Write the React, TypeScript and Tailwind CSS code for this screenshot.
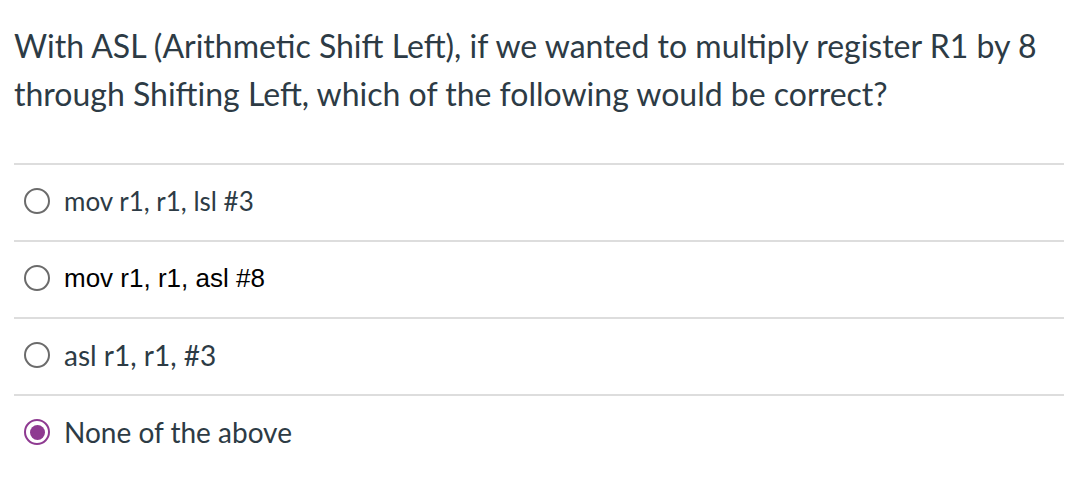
const OPTIONS = [
  { label: 'mov r1, r1, lsl #3', cls: 'text-[26px]', checked: false },
  { label: 'mov r1, r1, asl #8', cls: "font-['Liberation_Sans',Arial,sans-serif] text-[26px] text-black", checked: false },
  { label: 'asl r1, r1, #3', cls: 'text-[28px]', checked: false },
  { label: 'None of the above', cls: 'text-[28px]', checked: true },
];

function Radio({ checked }: { checked: boolean }) {
  if (checked) {
    return (
      <span className="flex h-[26px] w-[26px] items-center justify-center rounded-full border-2 border-[#8e3a91] bg-white">
        <span className="h-[15px] w-[15px] rounded-full bg-[#8e3a91]" />
      </span>
    );
  }
  return <span className="h-[26px] w-[26px] rounded-full border-2 border-[#6b6b6b] bg-white" />;
}

export default function App() {
  return (
    <div className="min-h-screen bg-white pl-[14px] pr-[2px] font-['Lato','Noto_Sans',sans-serif] text-[#2d3b45]">
      <p className="pt-[22px] text-[32px] leading-[48px]">
        With ASL (Arithmetic Shift Left), if we wanted to multiply register R1 by 8 through Shifting Left, which of
        the following would be correct?
      </p>
      <div className="mt-[45px]">
        {OPTIONS.map((o) => (
          <div key={o.label} className="flex h-[77px] items-center border-t-2 border-[#dddddd] pb-[3px] pl-[10px]">
            <Radio checked={o.checked} />
            <span className={`ml-[14px] ${o.cls}`}>{o.label}</span>
          </div>
        ))}
      </div>
    </div>
  );
}
